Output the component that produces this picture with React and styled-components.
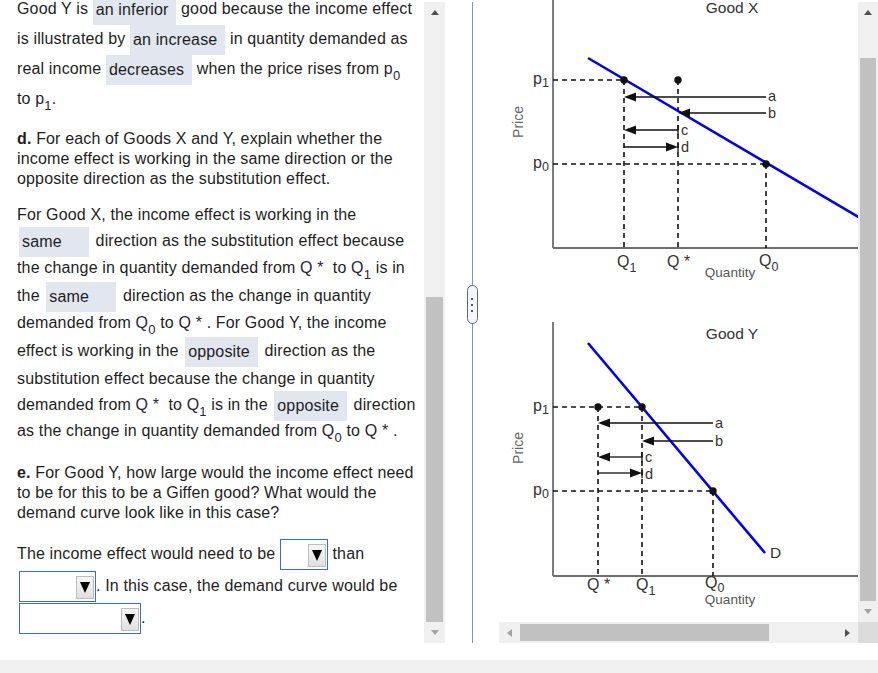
import React from "react";
import styled, { createGlobalStyle } from "styled-components";

const GlobalStyle = createGlobalStyle`
  html, body {
    margin: 0;
    padding: 0;
    background: #fff;
  }
  body {
    font-family: "Liberation Sans", Arial, sans-serif;
  }
`;

const Page = styled.div`
  width: 878px;
  height: 673px;
  display: flex;
  flex-direction: column;
  overflow: hidden;
`;

const Main = styled.div`
  display: flex;
  height: 660px;
`;

const Footer = styled.div`
  height: 13px;
  background: #f0f0f0;
`;

const LeftPane = styled.div`
  width: 424px;
  height: 643px;
  overflow: hidden;
  flex-shrink: 0;
  color: #1e1e1e;
  font-size: 16px;
  letter-spacing: 0.15px;
`;

const Text = styled.div`
  margin-top: -6px;
  padding-left: 17px;
`;

const Para = styled.div`
  margin-top: ${(p) => p.$gap || 0}px;
`;

const Line = styled.div`
  height: ${(p) => p.$h}px;
  line-height: ${(p) => p.$h}px;
  white-space: pre;

  sub {
    font-size: 13px;
    vertical-align: -6px;
    line-height: 0;
  }
`;

const Math = styled.span`
  color: #2a2438;
`;

const Answer = styled.span`
  display: inline-block;
  vertical-align: middle;
  box-sizing: border-box;
  min-width: ${(p) => p.$w || 0}px;
  height: 30px;
  line-height: 30px;
  margin: -8px ${(p) => (p.$w ? 2 : 0)}px;
  padding: 0 8px 0 3px;
  background: #e1e6ef;
`;

const Select = styled.span`
  display: inline-flex;
  vertical-align: middle;
  box-sizing: border-box;
  width: ${(p) => p.$w}px;
  height: 31px;
  margin: -8px 0 -8px ${(p) => p.$ml || 0}px;
  padding: 2px 1px 0 0;
  border: 1px solid #3a6bd1;
  background: #fff;
  justify-content: flex-end;
  align-items: center;
`;

const SelectButton = styled.span`
  display: flex;
  align-items: center;
  justify-content: center;
  box-sizing: border-box;
  width: 18px;
  height: 23px;
  border: 1px solid #bdbdbd;
  background: linear-gradient(#f5f5f5, #e1e1e1);
`;

const DownMark = styled.span`
  width: 0;
  height: 0;
  border-left: 5.5px solid transparent;
  border-right: 5.5px solid transparent;
  border-top: 11px solid #000;
`;

const Dropdown = ({ w, ml }) => (
  <Select $w={w} $ml={ml}>
    <SelectButton>
      <DownMark />
    </SelectButton>
  </Select>
);

/* scrollbars */
const VBar = styled.div`
  display: flex;
  flex-direction: column;
  flex-shrink: 0;
  width: ${(p) => p.$w}px;
  height: ${(p) => p.$h}px;
  margin-top: 2px;
  background: #f0f0f0;
`;

const HBar = styled.div`
  display: flex;
  height: 21px;
  background: #f0f0f0;
`;

const ArrowCell = styled.div`
  display: flex;
  align-items: center;
  justify-content: center;
  flex-shrink: 0;
  width: ${(p) => (p.$horizontal ? "21px" : "auto")};
  height: ${(p) => (p.$horizontal ? "auto" : "21px")};
`;

const tri = {
  up: (c) => `border-left:4.5px solid transparent;border-right:4.5px solid transparent;border-bottom:5px solid ${c};`,
  down: (c) => `border-left:4.5px solid transparent;border-right:4.5px solid transparent;border-top:5px solid ${c};`,
  left: (c) => `border-top:4.5px solid transparent;border-bottom:4.5px solid transparent;border-right:5px solid ${c};`,
  right: (c) => `border-top:4.5px solid transparent;border-bottom:4.5px solid transparent;border-left:5px solid ${c};`,
};

const Tri = styled.span`
  width: 0;
  height: 0;
  ${(p) => tri[p.$dir](p.$off ? "#a3a3a3" : "#505050")}
`;

const Track = styled.div`
  flex: 1;
  display: flex;
  flex-direction: ${(p) => (p.$horizontal ? "row" : "column")};
`;

const Thumb = styled.div`
  background: #c1c1c1;
  ${(p) =>
    p.$horizontal
      ? `width:${p.$size}px;margin:2px 0 2px ${p.$offset}px;`
      : `height:${p.$size}px;margin:${p.$offset}px 2px 0;`}
`;

const VScroll = ({ w, h, offset, size }) => (
  <VBar $w={w} $h={h}>
    <ArrowCell>
      <Tri $dir="up" />
    </ArrowCell>
    <Track>
      <Thumb $offset={offset} $size={size} />
    </Track>
    <ArrowCell>
      <Tri $dir="down" $off />
    </ArrowCell>
  </VBar>
);

/* splitter */
const Splitter = styled.div`
  width: 54px;
  flex-shrink: 0;
  display: flex;
  justify-content: center;
`;

const Rail = styled.div`
  position: relative;
  width: 1px;
  height: 641px;
  margin-top: 2px;
  background: #8894a6;
`;

const Handle = styled.div`
  position: absolute;
  top: 283px;
  left: -5px;
  box-sizing: border-box;
  width: 11px;
  height: 39px;
  border: 1px solid #5d6a7e;
  border-radius: 6px;
  background: #f4f6f9;
  display: flex;
  flex-direction: column;
  align-items: center;
  justify-content: center;
  gap: 4px;
`;

const Grip = styled.span`
  width: 2px;
  height: 2px;
  background: #4c5a70;
`;

/* right pane */
const RightPane = styled.div`
  display: grid;
  grid-template-columns: 359px 20px;
  grid-template-rows: 622px 21px;
`;

const Canvas = styled.div`
  overflow: hidden;
  display: flex;
  flex-direction: column;
`;

const Corner = styled.div`
  background: #dcdcdc;
`;

const ChartSvg = styled.svg`
  display: block;
  font-family: "Liberation Sans", Arial, sans-serif;
  fill: #333;
`;

const Dash = ({ x1, y1, x2, y2 }) => (
  <line x1={x1} y1={y1} x2={x2} y2={y2} stroke="#111" strokeWidth="1.6" strokeDasharray="5 4" />
);

const Dot = ({ x, y }) => <circle cx={x} cy={y} r="3.7" fill="#111" />;

const Arrow = ({ y, tail, tip }) => {
  const base = tip < tail ? tip + 12 : tip - 12;
  return (
    <g>
      <line x1={tail} y1={y} x2={base} y2={y} stroke="#111" strokeWidth="1.3" />
      <polygon points={`${tip},${y} ${base},${y - 4.5} ${base},${y + 4.5}`} fill="#111" />
    </g>
  );
};

const Tick = ({ x, y }) => <line x1={x} y1={y - 5} x2={x} y2={y + 5} stroke="#111" strokeWidth="1.3" />;

const Axes = ({ top, bottom }) => (
  <g stroke="#6e6e6e" strokeWidth="1.8" fill="none">
    <line x1="553" y1={top} x2="553" y2={bottom} />
    <line x1="553" y1={bottom} x2="860" y2={bottom} />
  </g>
);

const Sym = ({ x, y, ch, sub, dy = 4, size = 16 }) => (
  <text x={x} y={y} fontSize={size} fill="#333">
    {ch}
    {sub && (
      <tspan fontSize="12.5" dy={dy}>
        {sub}
      </tspan>
    )}
  </text>
);

const Small = ({ x, y, children }) => (
  <text x={x} y={y} fontSize="14.5" fill="#333">
    {children}
  </text>
);

const Price = ({ y }) => (
  <text transform={`translate(523 ${y}) rotate(-90)`} textAnchor="middle" fontSize="14" fill="#666">
    Price
  </text>
);

const Title = ({ y, children }) => (
  <text x="732" y={y} textAnchor="middle" fontSize="15.5" fill="#333">
    {children}
  </text>
);

const QuantityLabel = ({ y }) => (
  <text x="730" y={y} textAnchor="middle" fontSize="13.5" fill="#555">
    Quantity
  </text>
);

const GoodXChart = () => (
  <ChartSvg width="359" height="300" viewBox="499 0 359 300">
    <Title y={12.5}>Good X</Title>
    <Axes top={0} bottom={248} />
    <Dash x1={553} y1={80} x2={624} y2={80} />
    <Dash x1={553} y1={164} x2={766} y2={164} />
    <Dash x1={624} y1={80} x2={624} y2={248} />
    <Dash x1={678} y1={80} x2={678} y2={248} />
    <Dash x1={766} y1={164} x2={766} y2={248} />
    <line x1="588" y1="58" x2="860" y2="218" stroke="#0000f0" strokeWidth="2.6" />
    <Dot x={624} y={80} />
    <Dot x={678} y={80} />
    <Dot x={766} y={164} />
    <Arrow y={97} tail={766} tip={624} />
    <Arrow y={113} tail={766} tip={678} />
    <Arrow y={130} tail={678} tip={624} />
    <Tick x={678} y={130} />
    <Arrow y={147} tail={624} tip={678} />
    <Tick x={678} y={147} />
    <Small x={768} y={101}>a</Small>
    <Small x={768} y={118}>b</Small>
    <Small x={681} y={135}>c</Small>
    <Small x={681} y={152}>d</Small>
    <Sym x={533} y={84} ch="p" sub="1" dy={3} />
    <Sym x={533} y={168} ch="p" sub="0" dy={3} />
    <Price y={122} />
    <Sym x={617} y={267} ch="Q" sub="1" dy={5} />
    <Sym x={667} y={267} ch="Q *" />
    <Sym x={759} y={266} ch="Q" sub="0" dy={5} />
    <QuantityLabel y={277} />
  </ChartSvg>
);

const GoodYChart = () => (
  <ChartSvg width="359" height="322" viewBox="499 300 359 322">
    <Title y={339}>Good Y</Title>
    <Axes top={322} bottom={576} />
    <Dash x1={553} y1={407} x2={642} y2={407} />
    <Dash x1={553} y1={491} x2={713} y2={491} />
    <Dash x1={598} y1={407} x2={598} y2={576} />
    <Dash x1={642} y1={407} x2={642} y2={576} />
    <Dash x1={713} y1={491} x2={713} y2={576} />
    <line x1="588" y1="343" x2="765" y2="553" stroke="#0000f0" strokeWidth="2.6" />
    <Dot x={598} y={407} />
    <Dot x={642} y={407} />
    <Dot x={713} y={491} />
    <Arrow y={423} tail={713} tip={598} />
    <Arrow y={441} tail={713} tip={642} />
    <Arrow y={457} tail={642} tip={598} />
    <Tick x={642} y={457} />
    <Arrow y={473} tail={598} tip={642} />
    <Tick x={642} y={473} />
    <Small x={715} y={428}>a</Small>
    <Small x={715} y={446}>b</Small>
    <Small x={645} y={462}>c</Small>
    <Small x={645} y={479}>d</Small>
    <Sym x={533} y={411} ch="p" sub="1" dy={3} />
    <Sym x={533} y={495} ch="p" sub="0" dy={3} />
    <Price y={448} />
    <Sym x={587} y={590} ch="Q *" />
    <Sym x={636} y={590} ch="Q" sub="1" dy={5} />
    <Sym x={705} y={588} ch="Q" sub="0" dy={4} />
    <QuantityLabel y={604} />
    <text x="770" y="558" fontSize="15.5" fill="#333">D</text>
  </ChartSvg>
);

const paraThreeHeights = [26, 25, 29, 28, 26, 30, 26, 26, 26];

export default function App() {
  return (
    <Page>
      <GlobalStyle />
      <Main>
        <LeftPane>
          <Text>
            <Para>
              <Line $h={30}>
                Good Y is <Answer>an inferior</Answer> good because the income effect
              </Line>
              <Line $h={30}>
                is illustrated by <Answer>an increase</Answer> in quantity demanded as
              </Line>
              <Line $h={30}>
                real income <Answer>decreases</Answer> when the price rises from <Math>p<sub>0</sub></Math>
              </Line>
              <Line $h={30}>
                to <Math>p<sub>1</sub></Math>.
              </Line>
            </Para>
            <Para $gap={15}>
              <Line $h={20}>
                <b>d.</b> For each of Goods X and Y, explain whether the
              </Line>
              <Line $h={20}>income effect is working in the same direction or the</Line>
              <Line $h={20}>opposite direction as the substitution effect.</Line>
            </Para>
            <Para $gap={13}>
              <Line $h={paraThreeHeights[0]}>For Good X, the income effect is working in the</Line>
              <Line $h={paraThreeHeights[1]}>
                <Answer $w={70}>same</Answer> direction as the substitution effect because
              </Line>
              <Line $h={paraThreeHeights[2]}>
                the change in quantity demanded from <Math>Q * </Math> to <Math>Q<sub>1</sub></Math> is in
              </Line>
              <Line $h={paraThreeHeights[3]}>
                the <Answer $w={70}>same</Answer> direction as the change in quantity
              </Line>
              <Line $h={paraThreeHeights[4]}>
                demanded from <Math>Q<sub>0</sub></Math> to <Math>Q *</Math> . For Good Y, the income
              </Line>
              <Line $h={paraThreeHeights[5]}>
                effect is working in the <Answer $w={70}>opposite</Answer> direction as the
              </Line>
              <Line $h={paraThreeHeights[6]}>substitution effect because the change in quantity</Line>
              <Line $h={paraThreeHeights[7]}>
                demanded from <Math>Q * </Math> to <Math>Q<sub>1</sub></Math> is in the <Answer $w={70}>opposite</Answer> direction
              </Line>
              <Line $h={paraThreeHeights[8]}>
                as the change in quantity demanded from <Math>Q<sub>0</sub></Math> to <Math>Q *</Math> .
              </Line>
            </Para>
            <Para $gap={19}>
              <Line $h={20}>
                <b>e.</b> For Good Y, how large would the income effect need
              </Line>
              <Line $h={20}>to be for this to be a Giffen good? What would the</Line>
              <Line $h={20}>demand curve look like in this case?</Line>
            </Para>
            <Para $gap={15}>
              <Line $h={32}>
                The income effect would need to be <Dropdown w={48} /> than
              </Line>
              <Line $h={32}>
                <Dropdown w={77} ml={2} />. In this case, the demand curve would be
              </Line>
              <Line $h={32}>
                <Dropdown w={122} ml={2} />.
              </Line>
            </Para>
          </Text>
        </LeftPane>
        <VScroll w={21} h={641} offset={274} size={325} />
        <Splitter>
          <Rail>
            <Handle>
              <Grip />
              <Grip />
              <Grip />
            </Handle>
          </Rail>
        </Splitter>
        <RightPane>
          <Canvas>
            <GoodXChart />
            <GoodYChart />
          </Canvas>
          <VScroll w={20} h={620} offset={35} size={543} />
          <HBar>
            <ArrowCell $horizontal>
              <Tri $dir="left" $off />
            </ArrowCell>
            <Track $horizontal>
              <Thumb $horizontal $offset={0} $size={249} />
            </Track>
            <ArrowCell $horizontal>
              <Tri $dir="right" />
            </ArrowCell>
          </HBar>
          <Corner />
        </RightPane>
      </Main>
      <Footer />
    </Page>
  );
}
